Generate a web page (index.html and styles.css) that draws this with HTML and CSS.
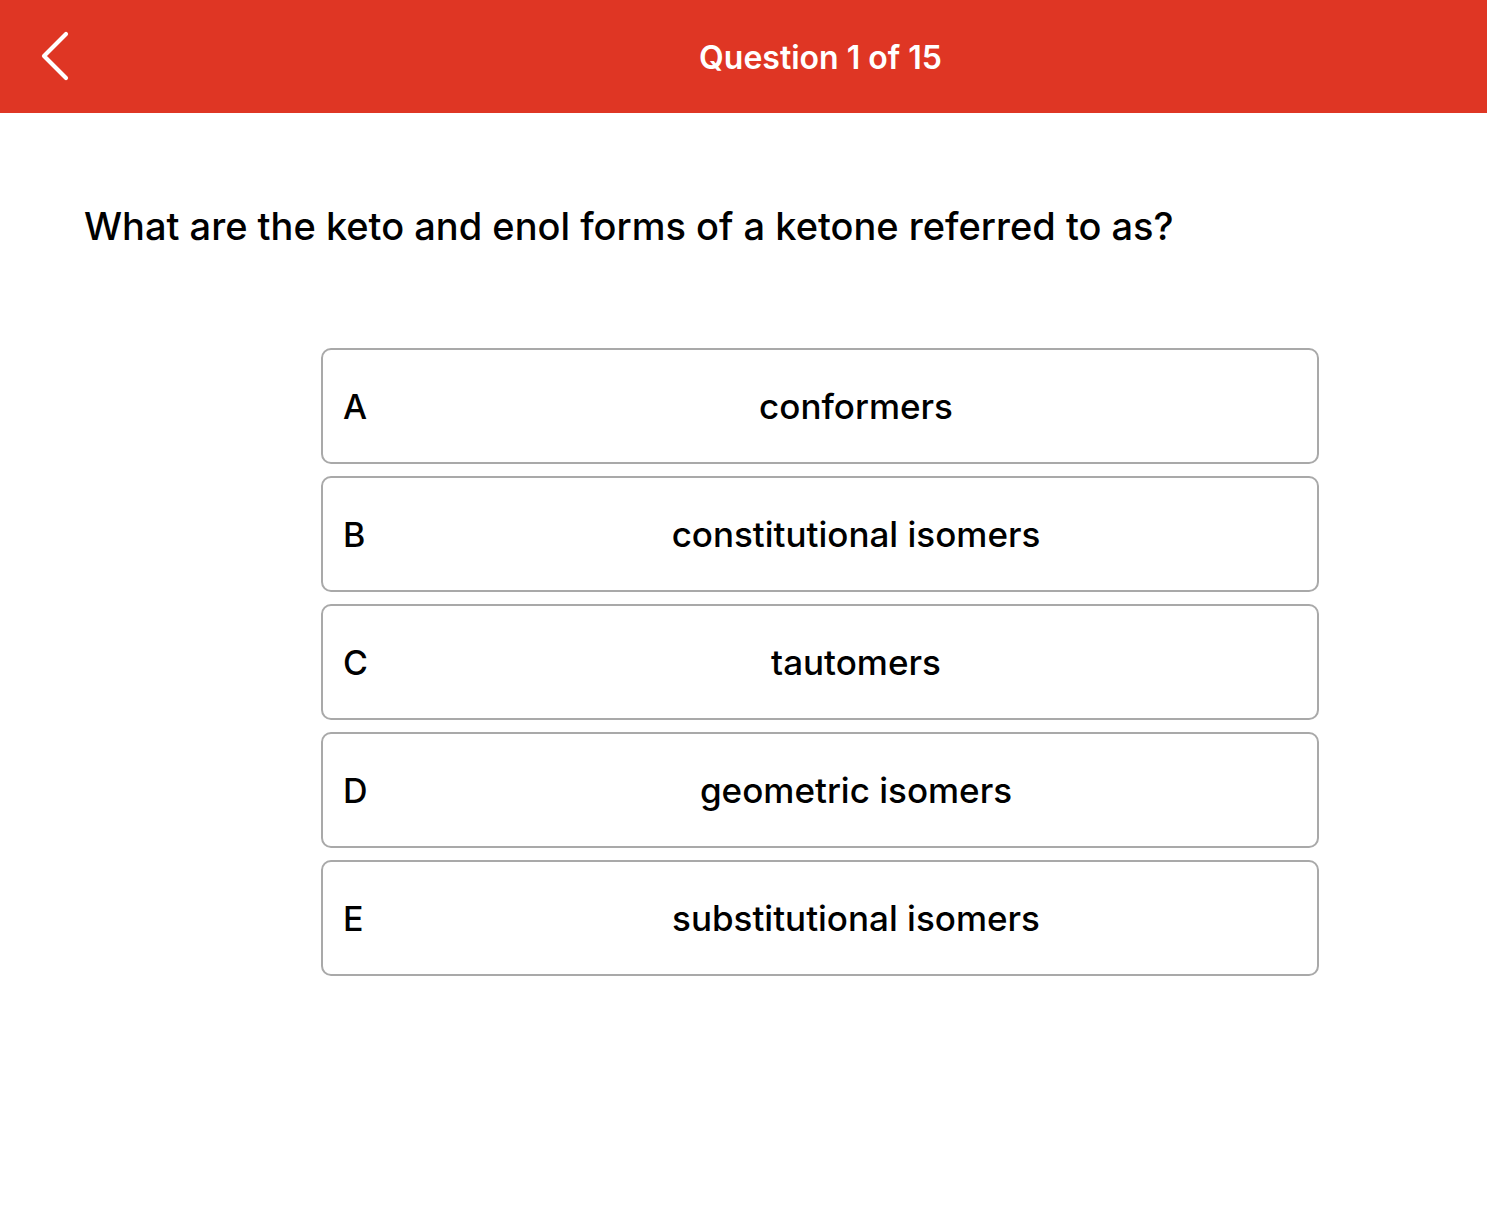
FILE: index.html
```html
<!DOCTYPE html>
<html lang="en">
<head>
    <meta charset="UTF-8">
    <meta name="viewport" content="width=device-width, initial-scale=1.0">
    <title>Question 1 of 15</title>
    <link rel="stylesheet" href="styles.css">
</head>
<body>
    <div class="topbar">
        <button class="back" aria-label="Back">
            <svg width="34" height="52" viewBox="0 0 34 52">
                <path d="M27 4 L5 26 L27 48" fill="none" stroke="#fff" stroke-width="4.2" stroke-linecap="round" stroke-linejoin="round"/>
            </svg>
        </button>
        <h1>Question 1 of 15</h1>
    </div>

    <div class="question">What are the keto and enol forms of a ketone referred to as?</div>

    <div class="options">
        <div class="option"><span class="letter">A</span><span class="answer">conformers</span></div>
        <div class="option"><span class="letter">B</span><span class="answer">constitutional isomers</span></div>
        <div class="option"><span class="letter">C</span><span class="answer">tautomers</span></div>
        <div class="option"><span class="letter">D</span><span class="answer">geometric isomers</span></div>
        <div class="option"><span class="letter">E</span><span class="answer">substitutional isomers</span></div>
    </div>
</body>
</html>
```

FILE: styles.css
```css
body {
    margin: 0;
    font-family: Inter, 'Noto Sans', Arial, sans-serif;
    background: #fff;
    color: #000;
}
.topbar {
    position: relative;
    display: flex;
    justify-content: center;
    align-items: center;
    height: 113px;
    background-color: #df3624;
}
.topbar h1 {
    margin: 2px 0 0 154px;
    font-size: 32px;
    font-weight: 600;
    color: #fff;
}
.back {
    position: absolute;
    left: 39px;
    top: 30px;
    padding: 0;
    border: none;
    background: none;
    cursor: pointer;
}
.question {
    margin: 90px 0 0 84px;
    font-size: 38px;
    font-weight: 500;
}
.options {
    display: flex;
    flex-direction: column;
    gap: 12px;
    width: 998px;
    margin: 99px 0 0 321px;
}
.option {
    display: flex;
    align-items: center;
    height: 116px;
    box-sizing: border-box;
    border: 2px solid #a9a9a9;
    border-radius: 10px;
}
.letter {
    width: 72px;
    box-sizing: border-box;
    padding-left: 20px;
    font-size: 34px;
    font-weight: 500;
}
.answer {
    flex: 1;
    text-align: center;
    font-size: 35px;
    font-weight: 500;
}
```
